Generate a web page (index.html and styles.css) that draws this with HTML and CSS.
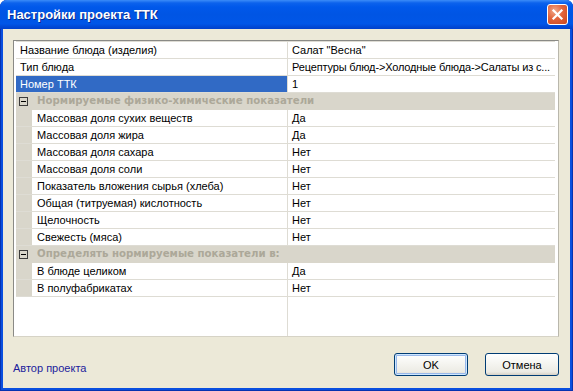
FILE: index.html
```html
<!DOCTYPE html>
<html lang="ru">
<head>
  <meta charset="UTF-8">
  <title>Настройки проекта ТТК</title>
  <link rel="stylesheet" href="styles.css">
</head>
<body>
  <div class="window">
    <div class="titlebar">
      <span class="title">Настройки проекта ТТК</span>
      <div class="close">
        <svg width="13" height="13" viewBox="0 0 13 13">
          <path d="M2.5 2.5 L10.5 10.5 M10.5 2.5 L2.5 10.5" stroke="#fff" stroke-width="2.2" stroke-linecap="square"/>
        </svg>
      </div>
    </div>

    <div class="content">
      <div class="grid">
        <div class="rows">
          <div class="row">
            <div class="name">Название блюда (изделия)</div>
            <div class="value">Салат "Весна"</div>
          </div>
          <div class="row">
            <div class="name">Тип блюда</div>
            <div class="value tight">Рецептуры блюд-&gt;Холодные блюда-&gt;Салаты из с...</div>
          </div>
          <div class="row selected">
            <div class="name">Номер ТТК</div>
            <div class="value">1</div>
          </div>

          <div class="row group">
            <span class="toggle">
              <svg width="9" height="9" viewBox="0 0 9 9">
                <rect x="0.5" y="0.5" width="8" height="8" fill="none" stroke="#3c3c3c"/>
                <path d="M2 4.5 H7" stroke="#000"/>
              </svg>
            </span>
            Нормируемые физико-химические показатели
          </div>
          <div class="row item">
            <div class="gutter"></div>
            <div class="name">Массовая доля сухих веществ</div>
            <div class="value">Да</div>
          </div>
          <div class="row item">
            <div class="gutter"></div>
            <div class="name">Массовая доля жира</div>
            <div class="value">Да</div>
          </div>
          <div class="row item">
            <div class="gutter"></div>
            <div class="name">Массовая доля сахара</div>
            <div class="value">Нет</div>
          </div>
          <div class="row item">
            <div class="gutter"></div>
            <div class="name">Массовая доля соли</div>
            <div class="value">Нет</div>
          </div>
          <div class="row item">
            <div class="gutter"></div>
            <div class="name">Показатель вложения сырья (хлеба)</div>
            <div class="value">Нет</div>
          </div>
          <div class="row item">
            <div class="gutter"></div>
            <div class="name">Общая (титруемая) кислотность</div>
            <div class="value">Нет</div>
          </div>
          <div class="row item">
            <div class="gutter"></div>
            <div class="name">Щелочность</div>
            <div class="value">Нет</div>
          </div>
          <div class="row item">
            <div class="gutter"></div>
            <div class="name">Свежесть (мяса)</div>
            <div class="value">Нет</div>
          </div>

          <div class="row group">
            <span class="toggle">
              <svg width="9" height="9" viewBox="0 0 9 9">
                <rect x="0.5" y="0.5" width="8" height="8" fill="none" stroke="#3c3c3c"/>
                <path d="M2 4.5 H7" stroke="#000"/>
              </svg>
            </span>
            Определять нормируемые показатели в:
          </div>
          <div class="row item">
            <div class="gutter"></div>
            <div class="name">В блюде целиком</div>
            <div class="value">Да</div>
          </div>
          <div class="row item">
            <div class="gutter"></div>
            <div class="name">В полуфабрикатах</div>
            <div class="value">Нет</div>
          </div>
        </div>
        <div class="filler"></div>
      </div>

      <div class="footer">
        <a class="author" href="#">Автор проекта</a>
        <div class="buttons">
          <button class="btn default">OK</button>
          <button class="btn">Отмена</button>
        </div>
      </div>
    </div>
  </div>
</body>
</html>
```

FILE: styles.css
```css
html, body {
  margin: 0;
  padding: 0;
  background: #fff;
}

.window {
  width: 573px;
  height: 391px;
  box-sizing: border-box;
  display: flex;
  flex-direction: column;
  background: #0a4fdf;
  border-radius: 7px 7px 0 0;
  overflow: hidden;
  box-shadow: inset 1px 0 #0732b0, inset -1px 0 #0732b0, inset 0 -1px #0732b0;
  font-family: "Liberation Sans", Arial, sans-serif;
  font-size: 11px;
}

.titlebar {
  height: 29px;
  flex: none;
  display: flex;
  align-items: center;
  padding: 0 5px 0 7px;
  background: linear-gradient(to bottom, #3b8cf8 0, #0c62ec 3px, #0058ea 7px, #0055e4 50%, #0056e8 82%, #0049d6 92%, #0040cc 100%);
}

.title {
  flex: 1;
  color: #fff;
  font-weight: bold;
  font-size: 13px;
  text-shadow: 1px 1px #0b2b8f;
}

.close {
  width: 21px;
  height: 21px;
  box-sizing: border-box;
  border: 1px solid #fff;
  border-radius: 3px;
  background: radial-gradient(circle at 35% 30%, #f0a88a 0, #e2643c 45%, #c8461e 100%);
  display: flex;
  align-items: center;
  justify-content: center;
}

.content {
  flex: 1;
  margin: 0 3px 3px;
  background: #ece9d8;
  display: flex;
  flex-direction: column;
}

.grid {
  margin: 11px 11px 0 10px;
  height: 297px;
  box-sizing: border-box;
  display: flex;
  flex-direction: column;
  background: #fff;
  border: 1px solid;
  border-color: #8a8a86 #b9b7ac #d6d3c6 #8a8a86;
  padding: 0 3px 0 2px;
}

.rows {
  border-top: 1px solid #dedcd4;
}

.row {
  display: grid;
  grid-template-columns: 271px 1fr;
  height: 17px;
  box-sizing: border-box;
  border-bottom: 1px solid #dedcd4;
  line-height: 16px;
  color: #000;
}

.row .name {
  padding-left: 4px;
  white-space: nowrap;
  overflow: hidden;
}

.row .value {
  border-left: 1px solid #dedcd4;
  padding-left: 4px;
  white-space: nowrap;
  overflow: hidden;
}

.row .value.tight {
  letter-spacing: -0.15px;
}

.row.selected .name {
  background: #316ac5;
  color: #fff;
}

.row.item {
  grid-template-columns: 16px 255px 1fr;
}

.row.item .gutter {
  background: #d9d6cb;
}

.row.item .name {
  padding-left: 5px;
}

.row.group {
  display: flex;
  align-items: center;
  background: #d9d6cb;
  border-bottom-color: #d9d6cb;
  color: #aca899;
  font-family: "DejaVu Sans", Verdana, sans-serif;
  font-weight: bold;
  font-size: 10.2px;
}

.toggle {
  width: 21px;
  box-sizing: border-box;
  padding-left: 3px;
  display: flex;
  align-items: center;
}

.filler {
  flex: 1;
  margin-left: 271px;
  border-left: 1px solid #dedcd4;
}

.footer {
  flex: 1;
  display: flex;
  align-items: flex-end;
  justify-content: space-between;
  padding: 0 11px 12px 10px;
}

.author {
  color: #1c1c9c;
  text-decoration: none;
  line-height: 13px;
  padding-bottom: 1px;
}

.buttons {
  display: flex;
  gap: 17px;
}

.btn {
  width: 74px;
  height: 23px;
  box-sizing: border-box;
  border: 1px solid #003c74;
  border-radius: 3px;
  background: linear-gradient(to bottom, #ffffff 0, #f6f6f2 40%, #ecebe4 85%, #d6d0c5 100%);
  font-family: "Liberation Sans", Arial, sans-serif;
  font-size: 11px;
  color: #000;
  padding: 0;
}

.btn.default {
  box-shadow: inset 0 0 0 1px #cee7ff, inset 0 0 0 2px #98b8ea;
}
```
